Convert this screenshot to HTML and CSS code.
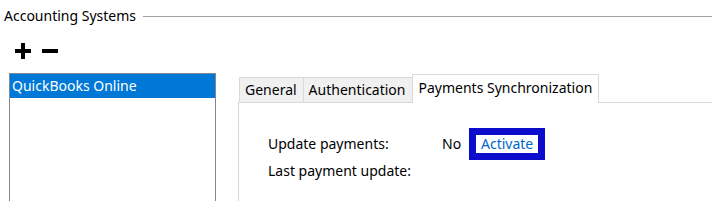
FILE: index.html
```html
<!DOCTYPE html>
<html lang="en">
<head>
    <meta charset="UTF-8">
    <meta name="viewport" content="width=device-width, initial-scale=1.0">
    <title>Accounting Systems</title>
    <link rel="stylesheet" href="styles.css">
</head>
<body>
    <div class="group-header">
        <span class="group-title">Accounting Systems</span>
        <span class="group-line"></span>
    </div>
    <div class="toolbar">
        <button class="tool" title="Add">
            <svg width="16" height="16" viewBox="0 0 16 16"><rect x="0" y="6" width="16" height="4" fill="#000"/><rect x="6" y="0" width="4" height="16" fill="#000"/></svg>
        </button>
        <button class="tool" title="Remove">
            <svg width="16" height="16" viewBox="0 0 16 16"><rect x="0" y="6" width="16" height="4" fill="#000"/></svg>
        </button>
    </div>
    <div class="main">
        <div class="list">
            <div class="list-item selected">QuickBooks Online</div>
        </div>
        <div class="tabs">
            <div class="tab-strip">
                <div class="tab">General</div>
                <div class="tab">Authentication</div>
                <div class="tab active">Payments Synchronization</div>
            </div>
            <div class="tab-panel">
                <div class="field-row">
                    <span class="field-label">Update payments:</span>
                    <span class="field-value">No</span>
                    <a class="activate" href="#">Activate</a>
                </div>
                <div class="field-row">
                    <span class="field-label">Last payment update:</span>
                </div>
            </div>
        </div>
    </div>
</body>
</html>
```

FILE: styles.css
```css
body {
    margin: 0;
    font-family: "Noto Sans", "Open Sans", sans-serif;
    font-size: 14px;
    color: #000;
    background: #fff;
    overflow: hidden;
    height: 201px;
}
.group-header {
    display: flex;
    align-items: center;
    height: 32px;
    padding-left: 4px;
}
.group-title {
    line-height: 20px;
}
.group-line {
    flex: 1;
    margin-left: 7px;
    border-top: 1px solid #a0a0a0;
}
.toolbar {
    display: flex;
    gap: 11px;
    padding: 11px 0 0 15px;
    height: 30px;
}
.tool {
    border: none;
    background: none;
    padding: 0;
    width: 16px;
    height: 16px;
    cursor: pointer;
}
.tool svg {
    display: block;
}
.main {
    display: flex;
    align-items: flex-start;
}
.list {
    margin-left: 9px;
    width: 205px;
    height: 127px;
    border: 1px solid #828790;
    border-bottom: none;
}
.list-item {
    height: 24px;
    line-height: 24px;
    padding-left: 2px;
}
.list-item.selected {
    background-color: #0078d7;
    color: #fff;
}
.tabs {
    flex: 1;
    margin-left: 22px;
    margin-right: -10px;
    padding-top: 1px;
}
.tab-strip {
    display: flex;
    align-items: flex-end;
    height: 28px;
    padding-left: 1px;
}
.tab {
    height: 24px;
    line-height: 24px;
    padding: 0 6px 0 5px;
    background-color: #f0f0f0;
    border: 1px solid #d9d9d9;
    border-bottom: none;
    margin-right: -1px;
}
.tab.active {
    position: relative;
    height: 28px;
    line-height: 26px;
    background-color: #fff;
    padding: 0 6px;
    margin-bottom: -1px;
}
.tab-panel {
    border: 1px solid #d9d9d9;
    border-bottom: none;
    height: 72px;
    padding: 27px 0 0 29px;
}
.field-row {
    display: flex;
    align-items: center;
    height: 27px;
}
.field-label {
    width: 174px;
}
.field-value {
    width: 27px;
}
.activate {
    color: #0066cc;
    text-decoration: none;
    border: 7px solid #0c0ccc;
    padding: 0 5px;
    line-height: 18px;
}
```
